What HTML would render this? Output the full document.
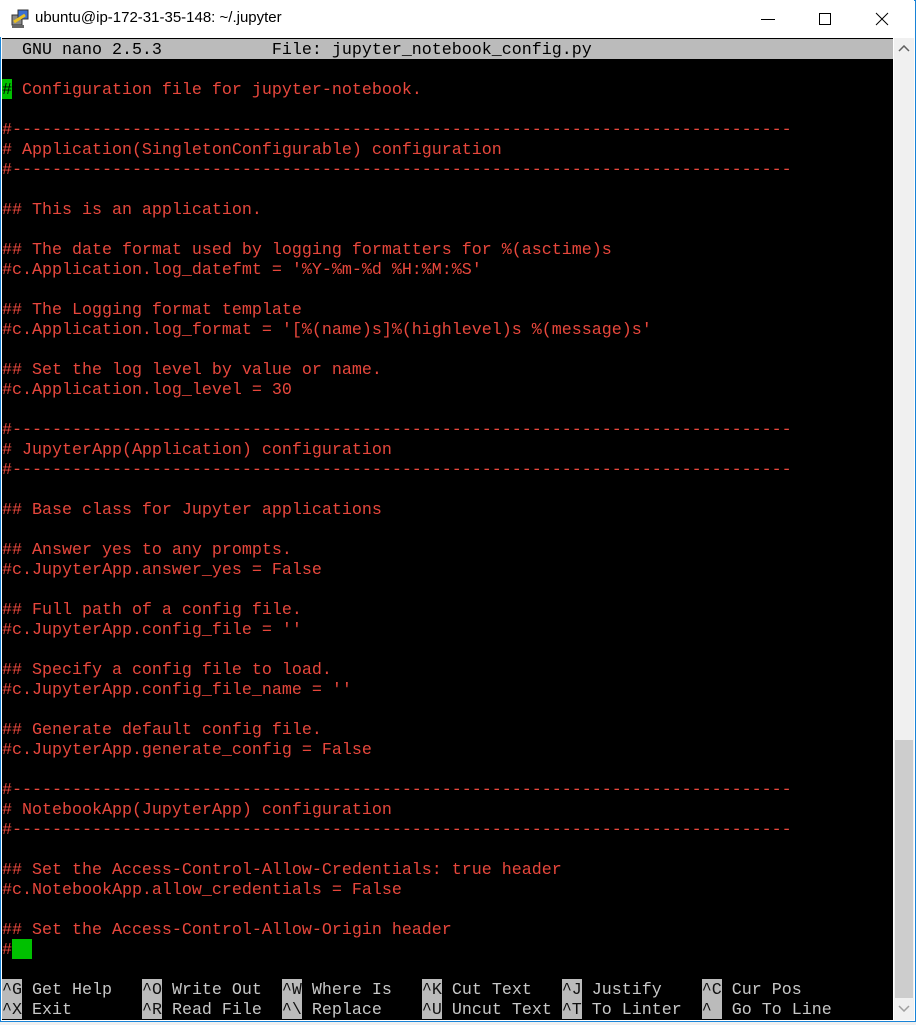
<!DOCTYPE html>
<html><head><meta charset="utf-8"><style>
*{margin:0;padding:0;box-sizing:border-box}
body{width:916px;height:1025px;background:#f0f0f0;position:relative;overflow:hidden;font-family:"Liberation Mono",monospace}
#frame{position:absolute;left:0;top:0;width:916px;height:1022px;border:1px solid #1883d7;background:#fff}
#title{position:absolute;left:0;top:0;width:914px;height:37px;background:#fff}
#title .t{position:absolute;left:35px;top:9px;font:15px "Liberation Sans",sans-serif;color:#000}
#term{position:absolute;left:2px;top:38px;width:891px;height:982px;background:#000;border-top:1px solid #000}
.r{position:absolute;left:0;height:20px;line-height:24px;font-size:16.67px;white-space:pre;color:#e8473c;overflow:hidden}
.hd{background:#bbb;color:#000;width:891px}
.k{background:#bbb;color:#111;display:inline-block;height:20px}
.w{color:#c8c8c8}
#sb{position:absolute;left:894px;top:38px;width:20px;height:982px;background:#f0f0f0}
#thumb{position:absolute;left:1px;top:702px;width:18px;height:258px;background:#cdcdcd}
</style></head><body>
<div id="frame"></div>
<div id="title">
<svg style="position:absolute;left:10px;top:9px" width="20" height="20" viewBox="0 0 20 20"><rect x="2" y="6" width="10" height="10" fill="#888" stroke="#333"/><rect x="8" y="1" width="10" height="9" fill="#3a6fd0" stroke="#333"/><path d="M4 13 L15 6" stroke="#e8c020" stroke-width="3"/><rect x="2" y="16" width="12" height="3" fill="#666"/></svg>
<div class="t">ubuntu@ip-172-31-35-148: ~/.jupyter</div>
<svg style="position:absolute;left:760px;top:12px" width="130" height="14"><path d="M1 7.5H15" stroke="#000"/><rect x="59.5" y="1.5" width="11" height="11" fill="none" stroke="#000"/><path d="M116 1L128 13M128 1L116 13" stroke="#000"/></svg>
</div>
<div id="term">
<div class="r hd" style="top:0">  GNU nano 2.5.3           File: jupyter_notebook_config.py</div>
<div class="r" style="top:40px"><span style="background:#00c000;color:#000;display:inline-block;height:20px">#</span> Configuration file for jupyter-notebook.</div>
<div class="r" style="top:80px">#------------------------------------------------------------------------------</div>
<div class="r" style="top:100px"># Application(SingletonConfigurable) configuration</div>
<div class="r" style="top:120px">#------------------------------------------------------------------------------</div>
<div class="r" style="top:160px">## This is an application.</div>
<div class="r" style="top:200px">## The date format used by logging formatters for %(asctime)s</div>
<div class="r" style="top:220px">#c.Application.log_datefmt = '%Y-%m-%d %H:%M:%S'</div>
<div class="r" style="top:260px">## The Logging format template</div>
<div class="r" style="top:280px">#c.Application.log_format = '[%(name)s]%(highlevel)s %(message)s'</div>
<div class="r" style="top:320px">## Set the log level by value or name.</div>
<div class="r" style="top:340px">#c.Application.log_level = 30</div>
<div class="r" style="top:380px">#------------------------------------------------------------------------------</div>
<div class="r" style="top:400px"># JupyterApp(Application) configuration</div>
<div class="r" style="top:420px">#------------------------------------------------------------------------------</div>
<div class="r" style="top:460px">## Base class for Jupyter applications</div>
<div class="r" style="top:500px">## Answer yes to any prompts.</div>
<div class="r" style="top:520px">#c.JupyterApp.answer_yes = False</div>
<div class="r" style="top:560px">## Full path of a config file.</div>
<div class="r" style="top:580px">#c.JupyterApp.config_file = ''</div>
<div class="r" style="top:620px">## Specify a config file to load.</div>
<div class="r" style="top:640px">#c.JupyterApp.config_file_name = ''</div>
<div class="r" style="top:680px">## Generate default config file.</div>
<div class="r" style="top:700px">#c.JupyterApp.generate_config = False</div>
<div class="r" style="top:740px">#------------------------------------------------------------------------------</div>
<div class="r" style="top:760px"># NotebookApp(JupyterApp) configuration</div>
<div class="r" style="top:780px">#------------------------------------------------------------------------------</div>
<div class="r" style="top:820px">## Set the Access-Control-Allow-Credentials: true header</div>
<div class="r" style="top:840px">#c.NotebookApp.allow_credentials = False</div>
<div class="r" style="top:880px">## Set the Access-Control-Allow-Origin header</div>
<div class="r" style="top:900px">#<span style="background:#00c000;display:inline-block;height:20px">  </span></div>
<div class="r w" style="top:940px"><span class="k">^G</span> Get Help   <span class="k">^O</span> Write Out  <span class="k">^W</span> Where Is   <span class="k">^K</span> Cut Text   <span class="k">^J</span> Justify    <span class="k">^C</span> Cur Pos</div>
<div class="r w" style="top:960px"><span class="k">^X</span> Exit       <span class="k">^R</span> Read File  <span class="k">^\</span> Replace    <span class="k">^U</span> Uncut Text <span class="k">^T</span> To Linter  <span class="k">^ </span> Go To Line</div>
</div>
<div id="sb">
<svg style="position:absolute;left:4px;top:7px" width="12" height="8"><path d="M1 6L6 1L11 6" fill="none" stroke="#606060" stroke-width="1.5"/></svg>
<div id="thumb"></div>
<svg style="position:absolute;left:4px;top:966px" width="12" height="8"><path d="M1 2L6 7L11 2" fill="none" stroke="#a0a0a0" stroke-width="1.5"/></svg>
</div>
</body></html>
